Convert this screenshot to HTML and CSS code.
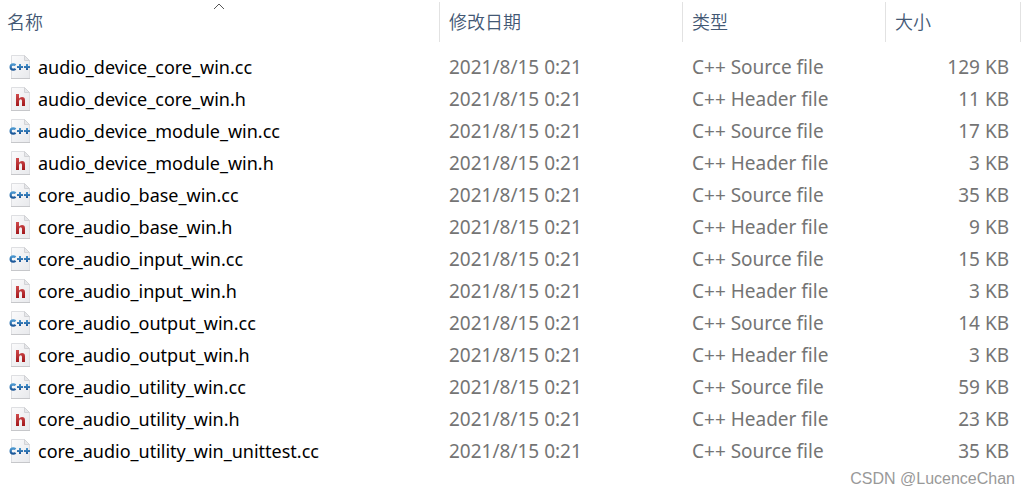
FILE: index.html
```html
<!DOCTYPE html>
<html lang="zh-CN">
<head>
<meta charset="utf-8">
<title>文件列表</title>
<link rel="stylesheet" href="styles.css">
</head>
<body>
<svg class="defs" aria-hidden="true">
  <defs>
    <linearGradient id="paper" x1="0" y1="0" x2="1" y2="1"><stop offset="0" stop-color="#fbfbfc"/><stop offset="1" stop-color="#e8e9ec"/></linearGradient>
    <linearGradient id="blue" x1="0" y1="0" x2="0" y2="1"><stop offset="0" stop-color="#4a97d0"/><stop offset="1" stop-color="#1c5798"/></linearGradient>
    <linearGradient id="red" x1="0" y1="0" x2="0" y2="1"><stop offset="0" stop-color="#cf4a4c"/><stop offset="1" stop-color="#a3181c"/></linearGradient>
    <symbol id="page" viewBox="0 0 22 24">
      <path d="M2.500 .5h13l5 5v18h-18z" fill="url(#paper)" stroke="#dedfe2"/>
      <path d="M15.500 .5v5h5z" fill="#e6e7ea" stroke="#d2d3d6"/>
      <path d="M2 23.500h19" stroke="#c6c7ca"/>
    </symbol>
    <symbol id="cc" viewBox="0 0 22 24">
      <use href="#page" width="22" height="24"/>
      <path d="M6.600 10.100Q5.600 9.300 4.200 9.300 1.600 9.400 1.600 12T4.200 14.700Q5.600 14.700 6.600 13.900" fill="none" stroke="url(#blue)" stroke-width="2.200"/>
      <path d="M10 9h2v2h2v2h-2v2h-2v-2H8v-2h2zM17 9h2v2h2v2h-2v2h-2v-2h-2v-2h2z" fill="url(#blue)"/>
    </symbol>
    <symbol id="h" viewBox="0 0 22 24">
      <use href="#page" width="22" height="24"/>
      <path d="M7 7H10v4.500Q11 10 13 10 16 10 16 13.300V19h-3v-5q0-1.700-1.300-1.700-1.700 0-1.700 2.200V19h-3z" fill="url(#red)"/>
    </symbol>
  </defs>
</svg>
<main class="explorer">
<table class="files">
  <colgroup><col class="col-name"><col class="col-date"><col class="col-type"><col class="col-size"></colgroup>
  <thead>
    <tr>
      <th class="sorted" aria-sort="ascending"><button class="sort" type="button">名称</button><svg class="caret" width="12" height="7" viewBox="0 0 12 7"><path d="M1 6l5-5 5 5" fill="none" stroke="#555"/></svg></th>
      <th><button class="sort" type="button">修改日期</button></th>
      <th><button class="sort" type="button">类型</button></th>
      <th><button class="sort" type="button">大小</button></th>
    </tr>
  </thead>
  <tbody>
    <tr><td class="name"><svg class="icon"><use href="#cc"/></svg>audio_device_core_win.cc</td><td>2021/8/15 0:21</td><td>C++ Source file</td><td class="size">129 KB</td></tr>
    <tr><td class="name"><svg class="icon"><use href="#h"/></svg>audio_device_core_win.h</td><td>2021/8/15 0:21</td><td>C++ Header file</td><td class="size">11 KB</td></tr>
    <tr><td class="name"><svg class="icon"><use href="#cc"/></svg>audio_device_module_win.cc</td><td>2021/8/15 0:21</td><td>C++ Source file</td><td class="size">17 KB</td></tr>
    <tr><td class="name"><svg class="icon"><use href="#h"/></svg>audio_device_module_win.h</td><td>2021/8/15 0:21</td><td>C++ Header file</td><td class="size">3 KB</td></tr>
    <tr><td class="name"><svg class="icon"><use href="#cc"/></svg>core_audio_base_win.cc</td><td>2021/8/15 0:21</td><td>C++ Source file</td><td class="size">35 KB</td></tr>
    <tr><td class="name"><svg class="icon"><use href="#h"/></svg>core_audio_base_win.h</td><td>2021/8/15 0:21</td><td>C++ Header file</td><td class="size">9 KB</td></tr>
    <tr><td class="name"><svg class="icon"><use href="#cc"/></svg>core_audio_input_win.cc</td><td>2021/8/15 0:21</td><td>C++ Source file</td><td class="size">15 KB</td></tr>
    <tr><td class="name"><svg class="icon"><use href="#h"/></svg>core_audio_input_win.h</td><td>2021/8/15 0:21</td><td>C++ Header file</td><td class="size">3 KB</td></tr>
    <tr><td class="name"><svg class="icon"><use href="#cc"/></svg>core_audio_output_win.cc</td><td>2021/8/15 0:21</td><td>C++ Source file</td><td class="size">14 KB</td></tr>
    <tr><td class="name"><svg class="icon"><use href="#h"/></svg>core_audio_output_win.h</td><td>2021/8/15 0:21</td><td>C++ Header file</td><td class="size">3 KB</td></tr>
    <tr><td class="name"><svg class="icon"><use href="#cc"/></svg>core_audio_utility_win.cc</td><td>2021/8/15 0:21</td><td>C++ Source file</td><td class="size">59 KB</td></tr>
    <tr><td class="name"><svg class="icon"><use href="#h"/></svg>core_audio_utility_win.h</td><td>2021/8/15 0:21</td><td>C++ Header file</td><td class="size">23 KB</td></tr>
    <tr><td class="name"><svg class="icon"><use href="#cc"/></svg>core_audio_utility_win_unittest.cc</td><td>2021/8/15 0:21</td><td>C++ Source file</td><td class="size">35 KB</td></tr>
  </tbody>
</table>
<footer class="credit">CSDN @LucenceChan</footer>
</main>
</body>
</html>
```
FILE: styles.css
```css
body {
  margin: 0;
  background: #fff;
  font-family: "Noto Sans", "Noto Sans CJK SC", sans-serif;
}
.defs {
  position: absolute;
  width: 0;
  height: 0;
}
.explorer {
  padding: 2px 8px 0 0;
}
.files {
  width: 100%;
  table-layout: fixed;
  border-collapse: separate;
  border-spacing: 0;
  color: #747474;
  font-size: 19px;
  line-height: 32px;
}
.col-date { width: 243px; }
.col-type { width: 203px; }
.col-size { width: 135px; }
.files th {
  height: 38px;
  padding: 0 0 2px 9px;
  border-right: 1px solid #e2e2e2;
  text-align: left;
}
.files .sorted {
  position: relative;
  padding-left: 7px;
}
.sort {
  display: block;
  padding: 0;
  border: 0;
  background: none;
  color: #435874;
  font-family: "Noto Sans CJK SC", sans-serif;
  font-size: 18px;
  font-weight: 350;
  line-height: 24px;
}
.caret {
  position: absolute;
  top: 1px;
  left: calc(50% - 7px);
}
/* Gap between the header and the first row */
.files tbody::before {
  content: "";
  display: block;
  height: 9px;
}
.files td {
  height: 32px;
  padding: 0 0 0 9px;
  white-space: nowrap;
}
.files .name {
  display: flex;
  align-items: center;
  gap: 7px;
  color: #000;
  font-size: 18px;
}
.files .size {
  padding: 0 12px 0 0;
  text-align: right;
}
.icon {
  flex: none;
  width: 22px;
  height: 24px;
}
.credit {
  padding-right: 6px;
  color: #999;
  font-family: "Liberation Sans", sans-serif;
  font-size: 16px;
  line-height: 24px;
  text-align: right;
}
```
